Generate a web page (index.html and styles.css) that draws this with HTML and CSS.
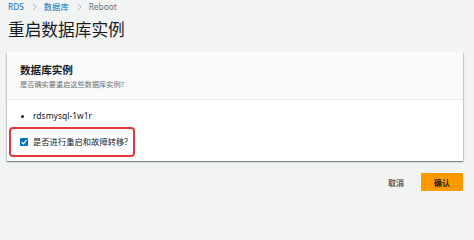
FILE: index.html
```html
<!DOCTYPE html>
<html lang="zh">
<head>
<meta charset="utf-8">
<link rel="stylesheet" href="styles.css">
</head>
<body>
<div class="page">
  <nav class="crumbs">
    <span class="link">RDS</span>
    <svg class="chev" viewBox="0 0 6 10" width="5" height="8"><path d="M1 1 L5 5 L1 9" fill="none" stroke="#aab7b8" stroke-width="1.2"/></svg>
    <span class="link">数据库</span>
    <svg class="chev" viewBox="0 0 6 10" width="5" height="8"><path d="M1 1 L5 5 L1 9" fill="none" stroke="#aab7b8" stroke-width="1.2"/></svg>
    <span class="current">Reboot</span>
  </nav>
  <h1 class="title">重启数据库实例</h1>
  <section class="card">
    <header class="card-head">
      <h2 class="card-title">数据库实例</h2>
      <p class="card-sub">是否确实要重启这些数据库实例?</p>
    </header>
    <div class="card-body">
      <ul class="list">
        <li class="item"><span class="dot"></span><span>rdsmysql-1w1r</span></li>
      </ul>
      <div class="mark">
        <label class="check">
          <span class="box"><svg viewBox="0 0 10 10" width="8" height="8"><path d="M2 5.2 L4.2 7.4 L8.2 2.6" fill="none" stroke="#fff" stroke-width="1.6"/></svg></span>
          <span class="check-text">是否进行重启和故障转移?</span>
        </label>
      </div>
    </div>
  </section>
  <div class="actions">
    <span class="cancel">取消</span>
    <span class="confirm">确认</span>
  </div>
</div>
</body>
</html>
```
FILE: styles.css
```css
html, body {
  margin: 0;
  padding: 0;
  background: #f2f3f3;
}
body {
  font-family: "Noto Sans", "Noto Sans CJK SC", sans-serif;
  color: #16191f;
}
.page {
  padding: 0 11px 0 7px;
}
.crumbs {
  display: flex;
  align-items: center;
  height: 14px;
  padding-left: 1px;
  font-size: 8.3px;
  line-height: 14px;
}
.link { color: #0073bb; }
.current { color: #687078; }
.chev { margin: 0 7px 0 8px; }
.title {
  margin: 6px 0 0;
  padding-left: 1px;
  font-size: 16.7px;
  line-height: 19px;
  font-weight: 400;
  color: #16191f;
}
.card {
  margin-top: 13px;
  background: #fff;
  box-shadow: 0 1px 1px 0 rgba(0,28,36,.3), 1px 1px 1px 0 rgba(0,28,36,.15), -1px 1px 1px 0 rgba(0,28,36,.15);
}
.card-head {
  box-sizing: border-box;
  height: 48px;
  padding: 11px 13px 0;
  background: #fafafa;
  border-bottom: 1px solid #eaeded;
}
.card-title {
  margin: 0;
  font-size: 10.6px;
  line-height: 14px;
  font-weight: 700;
}
.card-sub {
  margin: 2px 0 0;
  font-size: 7.2px;
  line-height: 10px;
  color: #687078;
}
.card-body {
  padding: 10px 13px 4px;
}
.list {
  margin: 0;
  padding: 0;
  list-style: none;
}
.item {
  display: flex;
  align-items: center;
  gap: 9px;
  font-size: 8.5px;
  line-height: 12px;
  padding-left: 1px;
}
.dot {
  width: 3px;
  height: 3px;
  border-radius: 50%;
  background: #16191f;
}
.mark {
  box-sizing: border-box;
  width: 126px;
  height: 30px;
  margin: 5px 0 0 -11px;
  border: 2px solid #e0393e;
  border-radius: 4px;
  display: flex;
  align-items: center;
  padding-left: 9px;
}
.check {
  display: flex;
  align-items: center;
  gap: 5px;
  font-size: 8.3px;
  line-height: 12px;
}
.box {
  width: 8px;
  height: 8px;
  border-radius: 1px;
  background: #0073bb;
  display: flex;
  align-items: center;
  justify-content: center;
}
.actions {
  display: flex;
  justify-content: flex-end;
  align-items: center;
  gap: 17px;
  margin-top: 12px;
}
.cancel {
  font-size: 8px;
  font-weight: 700;
  color: #545b64;
}
.confirm {
  box-sizing: border-box;
  width: 42px;
  height: 18px;
  background: #ff9900;
  border-radius: 1px;
  font-size: 8px;
  font-weight: 700;
  color: #16191f;
  display: flex;
  align-items: center;
  justify-content: center;
}
```
